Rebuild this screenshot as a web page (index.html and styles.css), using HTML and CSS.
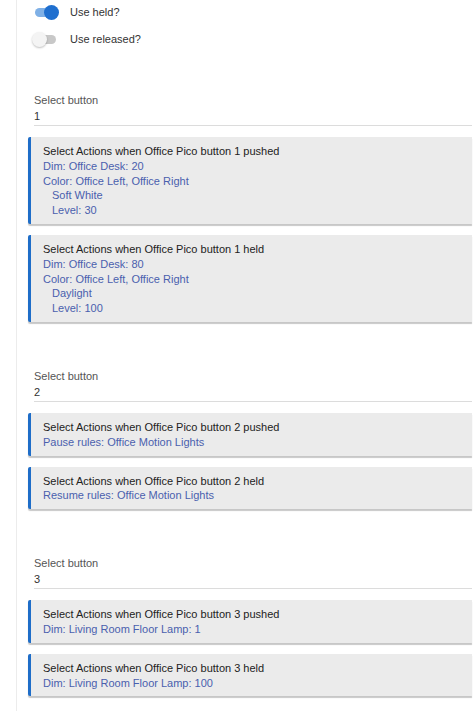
FILE: index.html
```html
<!DOCTYPE html>
<html>
<head>
<meta charset="utf-8">
<link rel="stylesheet" href="styles.css">
</head>
<body>
<div class="page">
  <div class="toggles">
    <label class="toggle on"><span class="track"><span class="thumb"></span></span><span class="tlabel">Use held?</span></label>
    <label class="toggle"><span class="track"><span class="thumb"></span></span><span class="tlabel">Use released?</span></label>
  </div>

  <div class="group g1">
    <div class="select">
      <div class="slabel">Select button</div>
      <div class="svalue">1</div>
    </div>
    <div class="card">
      <div class="title">Select Actions when Office Pico button 1 pushed</div>
      <div class="act">Dim: Office Desk: 20</div>
      <div class="act">Color: Office Left, Office Right</div>
      <div class="act sub">Soft White</div>
      <div class="act sub">Level: 30</div>
    </div>
    <div class="card">
      <div class="title">Select Actions when Office Pico button 1 held</div>
      <div class="act">Dim: Office Desk: 80</div>
      <div class="act">Color: Office Left, Office Right</div>
      <div class="act sub">Daylight</div>
      <div class="act sub">Level: 100</div>
    </div>
  </div>

  <div class="group">
    <div class="select">
      <div class="slabel">Select button</div>
      <div class="svalue">2</div>
    </div>
    <div class="card">
      <div class="title">Select Actions when Office Pico button 2 pushed</div>
      <div class="act">Pause rules: Office Motion Lights</div>
    </div>
    <div class="card">
      <div class="title">Select Actions when Office Pico button 2 held</div>
      <div class="act">Resume rules: Office Motion Lights</div>
    </div>
  </div>

  <div class="group">
    <div class="select">
      <div class="slabel">Select button</div>
      <div class="svalue">3</div>
    </div>
    <div class="card">
      <div class="title">Select Actions when Office Pico button 3 pushed</div>
      <div class="act">Dim: Living Room Floor Lamp: 1</div>
    </div>
    <div class="card">
      <div class="title">Select Actions when Office Pico button 3 held</div>
      <div class="act">Dim: Living Room Floor Lamp: 100</div>
    </div>
  </div>
</div>
</body>
</html>
```

FILE: styles.css
```css
html, body {
  margin: 0;
  padding: 0;
  background: #ffffff;
}
body {
  font-family: "Liberation Sans", Arial, sans-serif;
  font-size: 11px;
  color: #222;
  overflow: hidden;
}
.page {
  margin-left: 16px;
  border-left: 1px solid #ececec;
  padding-left: 11px;
  padding-right: 2px;
  min-height: 711px;
  box-sizing: border-box;
}
.toggles {
  display: flex;
  flex-direction: column;
  gap: 13px;
  padding-top: 5px;
  padding-left: 6px;
}
.toggle {
  display: flex;
  align-items: center;
  gap: 14px;
  height: 14px;
  font-size: 11px;
  color: #333;
}
.track {
  position: relative;
  width: 21px;
  height: 9px;
  border-radius: 5px;
  background: #c8c8c8;
  margin-left: 1px;
}
.thumb {
  position: absolute;
  top: -3px;
  left: -3px;
  width: 15px;
  height: 15px;
  border-radius: 50%;
  background: #f4f4f4;
  box-shadow: 0 1px 2px rgba(0,0,0,0.25);
}
.toggle.on .track {
  background: #7fb0e6;
}
.toggle.on .thumb {
  left: 9px;
  background: #1f6fcf;
  box-shadow: none;
}
.group {
  margin-top: 46px;
}
.g1 {
  margin-top: 46px;
}
.select {
  margin-left: 6px;
  border-bottom: 1px solid #dcdcdc;
  padding-bottom: 0;
  margin-bottom: 11px;
}
.slabel {
  color: #555;
  line-height: 16px;
}
.svalue {
  color: #333;
  line-height: 17px;
}
.card {
  background: #ebebeb;
  border-left: 3px solid #1e6dc8;
  border-radius: 2px 0 0 2px;
  box-shadow: 0 2px 1px rgba(0,0,0,0.22);
  padding: 7px 10px 6px 12px;
  margin-bottom: 11px;
  line-height: 14.8px;
}
.title {
  color: #222;
}
.act {
  color: #4a5fae;
}
.act.sub {
  padding-left: 9px;
}
```
